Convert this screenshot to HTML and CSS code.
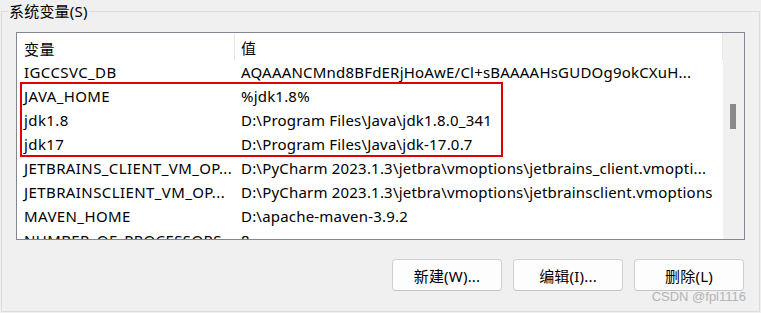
FILE: index.html
```html
<!DOCTYPE html>
<html lang="zh-CN">
<head>
    <meta charset="UTF-8">
    <meta name="viewport" content="width=device-width, initial-scale=1.0">
    <title>系统变量</title>
    <link rel="stylesheet" href="styles.css">
</head>
<body>
    <!-- System variables group -->
    <fieldset class="group">
        <legend>系统变量(S)</legend>

        <div class="list">
            <div class="list-body">
                <div class="row head">
                    <span class="name">变量</span>
                    <span class="value">值</span>
                </div>
                <div class="row">
                    <span class="name">IGCCSVC_DB</span>
                    <span class="value">AQAAANCMnd8BFdERjHoAwE/Cl+sBAAAAHsGUDOg9okCXuH...</span>
                </div>
                <div class="row">
                    <span class="name">JAVA_HOME</span>
                    <span class="value">%jdk1.8%</span>
                </div>
                <div class="row">
                    <span class="name">jdk1.8</span>
                    <span class="value">D:\Program Files\Java\jdk1.8.0_341</span>
                </div>
                <div class="row">
                    <span class="name">jdk17</span>
                    <span class="value">D:\Program Files\Java\jdk-17.0.7</span>
                </div>
                <div class="row">
                    <span class="name">JETBRAINS_CLIENT_VM_OP...</span>
                    <span class="value">D:\PyCharm 2023.1.3\jetbra\vmoptions\jetbrains_client.vmopti...</span>
                </div>
                <div class="row">
                    <span class="name">JETBRAINSCLIENT_VM_OP...</span>
                    <span class="value">D:\PyCharm 2023.1.3\jetbra\vmoptions\jetbrainsclient.vmoptions</span>
                </div>
                <div class="row">
                    <span class="name">MAVEN_HOME</span>
                    <span class="value">D:\apache-maven-3.9.2</span>
                </div>
                <div class="row">
                    <span class="name">NUMBER_OF_PROCESSORS</span>
                    <span class="value">8</span>
                </div>

                <!-- highlight around the java rows -->
                <div class="mark"></div>
            </div>
            <div class="scrollbar"><div class="thumb"></div></div>
        </div>

        <div class="actions">
            <button type="button" class="btn">新建(W)...</button>
            <button type="button" class="btn">编辑(I)...</button>
            <button type="button" class="btn">删除(L)</button>
        </div>

        <div class="watermark">CSDN @fpl1116</div>
    </fieldset>
</body>
</html>
```

FILE: styles.css
```css
body {
    margin: 0;
    background: #f0f0f0;
    font-family: "Noto Sans", "Noto Sans CJK SC", sans-serif;
    font-size: 15px;
    letter-spacing: 0.2px;
    color: #000;
}
.group {
    position: relative;
    box-sizing: border-box;
    width: 759px;
    height: 311px;
    margin: 1px 0 0 1px;
    padding: 0;
    border: 1px solid #dcdcdc;
}
.group legend {
    margin-left: 6px;
    padding: 0 1px;
    line-height: 20px;
}
.list {
    display: flex;
    box-sizing: border-box;
    width: 729px;
    height: 208px;
    margin: 11px 0 0 14px;
    border: 1px solid #828790;
    background: #fff;
    overflow: hidden;
}
.list-body {
    position: relative;
    flex: 1;
    overflow: hidden;
}
.row {
    display: flex;
    align-items: center;
    height: 24px;
    white-space: nowrap;
}
.row.head {
    height: 27px;
    padding-top: 3px;
    box-sizing: border-box;
    border-right: 1px solid #e5e5e5;
}
.name {
    box-sizing: border-box;
    width: 217px;
    padding-left: 7px;
    letter-spacing: 0.4px;
    overflow: hidden;
}
.value {
    flex: 1;
    padding-left: 7px;
    overflow: hidden;
}
.head .value {
    padding-left: 6px;
    border-left: 1px solid #e5e5e5;
    align-self: stretch;
    display: flex;
    align-items: center;
    margin-top: -2px;
}
.mark {
    position: absolute;
    left: 3px;
    top: 49px;
    width: 483px;
    height: 75px;
    box-sizing: border-box;
    border: 2px solid #e00000;
}
.scrollbar {
    width: 21px;
    background: #f0f0f0;
}
.thumb {
    width: 6px;
    height: 25px;
    margin: 71px 0 0 7px;
    background: #8a8a8a;
}
.actions {
    display: flex;
    justify-content: flex-end;
    gap: 11px;
    margin: 19px 15px 0 0;
}
.btn {
    width: 110px;
    height: 32px;
    border: 1px solid #d0d0d0;
    border-bottom-color: #c4c4c4;
    border-radius: 4px;
    background: #fdfdfd;
    font-family: inherit;
    font-size: 15px;
    letter-spacing: 0.2px;
    color: #000;
}
.watermark {
    position: absolute;
    right: 13px;
    bottom: 7px;
    font-family: "Liberation Sans", Arial, sans-serif;
    font-size: 13px;
    letter-spacing: 0;
    color: #b4b4b4;
}
```
